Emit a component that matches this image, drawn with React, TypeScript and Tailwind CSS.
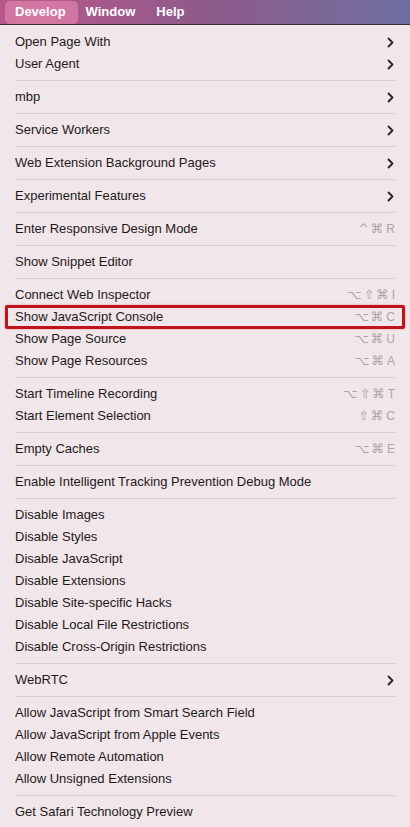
import { Fragment } from "react";

type Item =
  | { kind: "sep" }
  | { kind: "item"; label: string; shortcut?: string[]; submenu?: boolean; outlined?: boolean };

const sep: Item = { kind: "sep" };
const it = (label: string, extra: Partial<Omit<Extract<Item, { kind: "item" }>, "kind" | "label">> = {}): Item => ({
  kind: "item",
  label,
  ...extra,
});

const items: Item[] = [
  it("Open Page With", { submenu: true }),
  it("User Agent", { submenu: true }),
  sep,
  it("mbp", { submenu: true }),
  sep,
  it("Service Workers", { submenu: true }),
  sep,
  it("Web Extension Background Pages", { submenu: true }),
  sep,
  it("Experimental Features", { submenu: true }),
  sep,
  it("Enter Responsive Design Mode", { shortcut: ["^", "⌘", "R"] }),
  sep,
  it("Show Snippet Editor"),
  sep,
  it("Connect Web Inspector", { shortcut: ["⌥", "⇧", "⌘", "I"] }),
  it("Show JavaScript Console", { shortcut: ["⌥", "⌘", "C"], outlined: true }),
  it("Show Page Source", { shortcut: ["⌥", "⌘", "U"] }),
  it("Show Page Resources", { shortcut: ["⌥", "⌘", "A"] }),
  sep,
  it("Start Timeline Recording", { shortcut: ["⌥", "⇧", "⌘", "T"] }),
  it("Start Element Selection", { shortcut: ["⇧", "⌘", "C"] }),
  sep,
  it("Empty Caches", { shortcut: ["⌥", "⌘", "E"] }),
  sep,
  it("Enable Intelligent Tracking Prevention Debug Mode"),
  sep,
  it("Disable Images"),
  it("Disable Styles"),
  it("Disable JavaScript"),
  it("Disable Extensions"),
  it("Disable Site-specific Hacks"),
  it("Disable Local File Restrictions"),
  it("Disable Cross-Origin Restrictions"),
  sep,
  it("WebRTC", { submenu: true }),
  sep,
  it("Allow JavaScript from Smart Search Field"),
  it("Allow JavaScript from Apple Events"),
  it("Allow Remote Automation"),
  it("Allow Unsigned Extensions"),
  sep,
  it("Get Safari Technology Preview"),
];

function Chevron() {
  return (
    <svg width="7" height="11" viewBox="0 0 7 11" className="mr-[1px]">
      <path d="M1.5 1.5 L5.5 5.5 L1.5 9.5" fill="none" stroke="#2a2226" strokeWidth="1.8" strokeLinecap="round" strokeLinejoin="round" />
    </svg>
  );
}

function Shortcut({ keys }: { keys: string[] }) {
  return (
    <span className="flex items-center gap-[2px] text-[12.5px] text-[#aca5a8] [font-family:'DejaVu_Sans',sans-serif]">
      {keys.map((k, i) => (
        <span key={i} className={/[A-Z]/.test(k) ? "ml-[1px] text-[12px] [font-family:'Liberation_Sans',sans-serif]" : ""}>
          {k}
        </span>
      ))}
    </span>
  );
}

export default function App() {
  return (
    <div className="w-[410px] h-[827px] overflow-hidden bg-[#f1e6e9] [font-family:'Liberation_Sans',Arial,sans-serif]">
      {/* Menu bar */}
      <div className="h-[24px] flex items-center bg-gradient-to-r from-[#b9578b] via-[#8f5a8a] to-[#6a6e9f] text-white text-[13px] font-bold">
        <div className="ml-[5px] h-[23px] pl-[10px] pr-[12px] flex items-center rounded-[5px] bg-[#dd80aa]/75">Develop</div>
        <div className="ml-[8px]">Window</div>
        <div className="ml-[21px]">Help</div>
      </div>
      <div className="h-px bg-[#3d2e3c]" />

      {/* Menu */}
      <div className="pt-[6px] text-[13px] text-[#1e1a1c]">
        {items.map((item, i) => (
          <Fragment key={i}>
            {item.kind === "sep" ? (
              <div className="h-[11px] flex items-center px-[15px]">
                <div className="h-px w-full bg-[#d9cfd2]" />
              </div>
            ) : item.outlined ? (
              <div className="h-[24px] -my-[1px] mx-[5px] pl-[7px] pr-[7px] flex items-center justify-between border-[3px] border-[#c0141d] rounded-[2px] shadow-[0_0_2px_rgba(200,22,31,0.45)]">
                <span>{item.label}</span>
                {item.shortcut && <Shortcut keys={item.shortcut} />}
              </div>
            ) : (
              <div className="h-[22px] flex items-center justify-between px-[15px]">
                <span>{item.label}</span>
                {item.submenu && <Chevron />}
                {item.shortcut && <Shortcut keys={item.shortcut} />}
              </div>
            )}
          </Fragment>
        ))}
      </div>
    </div>
  );
}
